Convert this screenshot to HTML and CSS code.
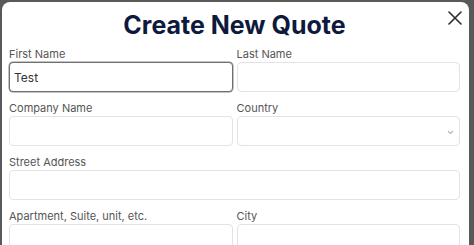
FILE: index.html
```html
<!DOCTYPE html>
<html lang="en">
<head>
    <meta charset="UTF-8">
    <meta name="viewport" content="width=device-width, initial-scale=1.0">
    <title>Create New Quote</title>
    <link rel="stylesheet" href="styles.css">
</head>
<body>
    <div class="modal">
        <div class="modal-header">
            <h1>Create New Quote</h1>
            <button class="close-btn" aria-label="Close">
                <svg width="14" height="14" viewBox="0 0 14 14">
                    <path d="M1 1 L13 13 M13 1 L1 13" stroke="#2b2b2b" stroke-width="1.6" stroke-linecap="round" fill="none"/>
                </svg>
            </button>
        </div>

        <form class="quote-form">
            <div class="field">
                <label for="firstName">First Name</label>
                <input type="text" id="firstName" class="focused" value="Test">
            </div>
            <div class="field">
                <label for="lastName">Last Name</label>
                <input type="text" id="lastName">
            </div>
            <div class="field">
                <label for="company">Company Name</label>
                <input type="text" id="company">
            </div>
            <div class="field">
                <label for="country">Country</label>
                <div class="select-wrap">
                    <select id="country">
                        <option value=""></option>
                    </select>
                    <svg class="chevron" width="7" height="5" viewBox="0 0 7 5">
                        <path d="M1 1 L3.5 3.5 L6 1" stroke="#b5b5b5" stroke-width="1.1" fill="none"/>
                    </svg>
                </div>
            </div>
            <div class="field wide">
                <label for="street">Street Address</label>
                <input type="text" id="street">
            </div>
            <div class="field">
                <label for="apartment">Apartment, Suite, unit, etc.</label>
                <input type="text" id="apartment">
            </div>
            <div class="field">
                <label for="city">City</label>
                <input type="text" id="city">
            </div>
        </form>
    </div>
</body>
</html>
```

FILE: styles.css
```css
body {
    font-family: Inter, 'Noto Sans', sans-serif;
    background: #595959;
    margin: 0;
    padding: 2px 0 0 2px;
    height: 245px;
    box-sizing: border-box;
    overflow: hidden;
}

.modal {
    width: 467px;
    background: #fff;
    border-radius: 8px 8px 0 0;
    padding: 0 9px 20px 7px;
    box-sizing: border-box;
}

.modal-header {
    position: relative;
    height: 45px;
    text-align: center;
}

h1 {
    margin: 0;
    padding-top: 8px;
    font-size: 25px;
    line-height: 30px;
    font-weight: 700;
    color: #0e1a3d;
}

.close-btn {
    position: absolute;
    top: 9px;
    right: -2px;
    width: 14px;
    height: 14px;
    padding: 0;
    border: none;
    background: none;
    cursor: pointer;
}

.close-btn svg {
    display: block;
}

.quote-form {
    display: grid;
    grid-template-columns: 1fr 1fr;
    column-gap: 4px;
    row-gap: 9px;
}

.field {
    display: flex;
    flex-direction: column;
}

.field.wide {
    grid-column: span 2;
}

label {
    font-size: 11px;
    line-height: 14px;
    color: #555;
    margin-bottom: 1px;
}

input,
select {
    height: 30px;
    width: 100%;
    box-sizing: border-box;
    border: 1px solid #e3e3e3;
    border-radius: 4px;
    background: #fff;
    font-family: inherit;
    font-size: 12px;
    color: #333;
    padding: 0 4px;
    outline: none;
}

input.focused {
    border: 1.5px solid #707070;
    box-shadow: 0 0 0 0.5px #8a8a8a;
}

.select-wrap {
    position: relative;
}

select {
    appearance: none;
    -webkit-appearance: none;
}

.chevron {
    position: absolute;
    right: 6px;
    top: 14px;
}
```
